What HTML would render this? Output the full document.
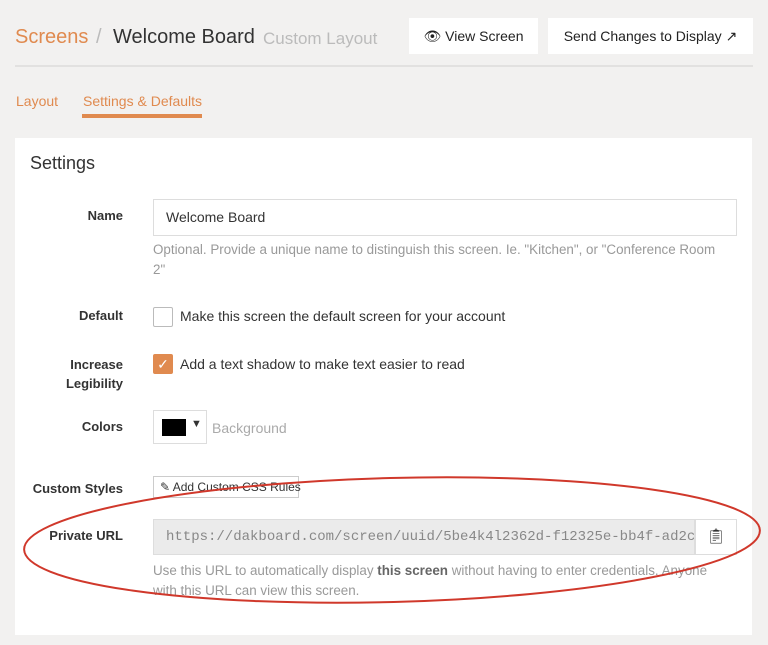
<!DOCTYPE html>
<html><head><style>
body{margin:0;width:768px;height:645px;background:#f2f1f0;font-family:"Liberation Sans",sans-serif;position:relative;overflow:hidden;color:#333}
.a{position:absolute;white-space:nowrap}
.btn{position:absolute;background:#fff;height:36px;top:18px;font-size:14px;line-height:36px;text-align:center;color:#222}
.lbl{position:absolute;font-size:13px;font-weight:bold;color:#333;text-align:right;width:110px;left:13px}
.help{position:absolute;font-size:13.4px;color:#999;left:153px;line-height:20px}
.cb{position:absolute;left:153px;width:18px;height:18px;border:1px solid #bbb;border-radius:2px;background:#fff}
</style></head><body>
<div class="a" style="left:15px;top:26px;font-size:20px;color:#e08a4f">Screens</div>
<div class="a" style="left:96px;top:26px;font-size:20px;color:#bbb">/</div>
<div class="a" style="left:113px;top:26px;font-size:20px;color:#333">Welcome Board</div>
<div class="a" style="left:263px;top:29px;font-size:17px;color:#bbb">Custom Layout</div>
<div class="btn" style="left:409px;width:129px">&#128065;&#xFE0E; View Screen</div>
<div class="btn" style="left:548px;width:205px">Send Changes to Display &#x2197;</div>
<div class="a" style="left:15px;top:65px;width:738px;height:2px;background:#e2e1e0"></div>
<div class="a" style="left:16px;top:93px;font-size:14px;color:#e08a4f">Layout</div>
<div class="a" style="left:83px;top:93px;font-size:14px;color:#e08a4f">Settings &amp; Defaults</div>
<div class="a" style="left:82px;top:114px;width:120px;height:4px;background:#e08a4f"></div>
<div class="a" style="left:15px;top:138px;width:737px;height:497px;background:#fff"></div>
<div class="a" style="left:30px;top:153px;font-size:18px;color:#333">Settings</div>
<div class="lbl" style="top:208px">Name</div>
<div class="a" style="left:153px;top:199px;font-size:14px;line-height:35px;padding-left:12px;box-sizing:border-box;width:584px;height:37px;border:1px solid #ddd">Welcome Board</div>
<div class="help" style="top:240px">Optional. Provide a unique name to distinguish this screen. Ie. "Kitchen", or "Conference Room<br>2"</div>
<div class="lbl" style="top:308px">Default</div>
<div class="cb" style="top:307px"></div>
<div class="a" style="left:180px;top:308px;font-size:14px;color:#333">Make this screen the default screen for your account</div>
<div class="lbl" style="top:355px;line-height:19px">Increase<br>Legibility</div>
<div class="cb" style="top:354px;background:#e08a4f;border-color:#e08a4f;color:#fff;font-size:14px;text-align:center;line-height:18px">&#10003;</div>
<div class="a" style="left:180px;top:356px;font-size:14px;color:#333">Add a text shadow to make text easier to read</div>
<div class="lbl" style="top:419px">Colors</div>
<div class="a" style="left:153px;top:410px;width:54px;height:34px;border:1px solid #ddd;box-sizing:border-box"><div class="a" style="left:8px;top:8px;width:24px;height:17px;background:#000"></div><div class="a" style="left:37px;top:7px;font-size:11px">&#9660;</div></div>
<div class="a" style="left:212px;top:420px;font-size:14px;color:#aaa">Background</div>
<div class="lbl" style="top:481px">Custom Styles</div>
<div class="a" style="left:153px;top:476px;width:146px;height:22px;border:1px solid #ccc;box-sizing:border-box;font-size:12px;line-height:20px;padding-left:6px;color:#333">&#9998; Add Custom CSS Rules</div>
<div class="lbl" style="top:528px">Private URL</div>
<div class="a" style="left:153px;top:519px;width:542px;height:36px;background:#ebebeb;border:1px solid #ddd;box-sizing:border-box;font-family:'Liberation Mono',monospace;font-size:14px;line-height:34px;padding-left:12px;color:#888;overflow:hidden">https://dakboard.com/screen/uuid/5be4k4l2362d-f12325e-bb4f-ad2c8</div>
<div class="a" style="left:695px;top:519px;width:42px;height:36px;border:1px solid #ddd;box-sizing:border-box;font-size:15px;line-height:34px;text-align:center">&#128203;&#xFE0E;</div>
<div class="help" style="top:561px">Use this URL to automatically display <b style="color:#666">this screen</b> without having to enter credentials. Anyone<br>with this URL can view this screen.</div>
<svg class="a" style="left:0;top:0" width="768" height="645"><ellipse cx="392" cy="540" rx="368" ry="62" transform="rotate(-1.5 392 540)" fill="none" stroke="#d0382b" stroke-width="2"/></svg>
</body></html>
